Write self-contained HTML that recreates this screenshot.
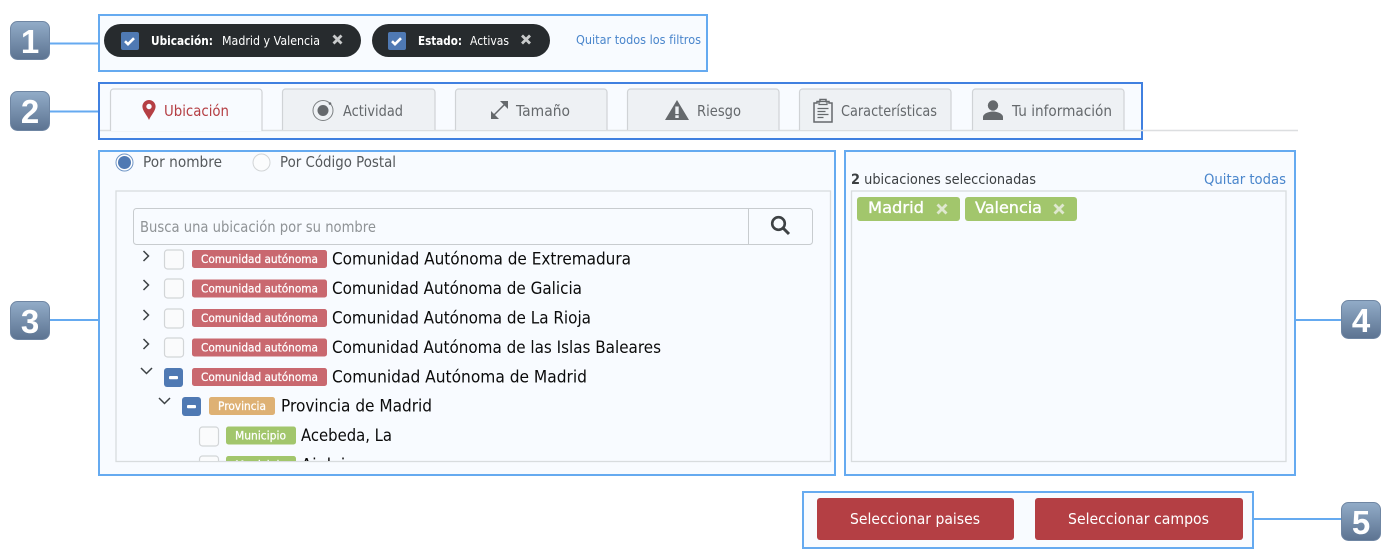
<!DOCTYPE html>
<html lang="es"><head><meta charset="utf-8"><title>Filtros</title>
<style>
html,body{margin:0;padding:0;background:#fff;width:1390px;height:558px;overflow:hidden}
svg{display:block}
text{font-family:"DejaVu Sans","Liberation Sans",sans-serif}
.box{fill:#f8fbff;stroke:#65aaf0;stroke-width:2}
.ln{stroke:#65aaf0;stroke-width:2}
.tab{fill:#eef1f4;stroke:#d0d3d6;stroke-width:1.2}
.tt{font-size:14.800px;fill:#65696c}
.rowt{font-size:16.800px;fill:#0b0b0b}
.tag{font-size:11.500px;fill:#fff;stroke:#fff;stroke-width:.25}
.cb{fill:#fafbfc;stroke:#d2d5d7;stroke-width:1.2}
.cbf{fill:#4f79b3}
.chev{fill:none;stroke:#3d4245;stroke-width:1.5}
.num{font-size:33px;font-weight:bold;fill:#fff;font-family:"Liberation Sans",sans-serif}
.bd{fill:url(#g);stroke:#6f86a3;stroke-width:1}
</style></head><body>
<svg width="1390" height="558" viewBox="0 0 1390 558" xmlns="http://www.w3.org/2000/svg">
<defs>
<linearGradient id="g" x1="0" y1="0" x2="0" y2="1"><stop offset="0" stop-color="#92acc8"/><stop offset="1" stop-color="#5c7391"/></linearGradient>
<clipPath id="tree"><rect x="117" y="246" width="712" height="215"/></clipPath>
<g id="chk"><rect x="0" y="0" width="19" height="19" rx="3" class="cb"/></g>
<g id="min"><rect x="0" y="0" width="19" height="19" rx="3" class="cbf"/><rect x="5" y="8" width="9" height="3.200" rx="1" fill="#fff"/></g>
</defs>

<!-- connector lines -->
<path class="ln" d="M50 43.500H98M50 111.500H98M50 320H98M1296 320H1341M1254 519H1341"/>

<!-- number badges -->
<g>
<rect class="bd" x="10.500" y="21.500" width="39" height="38" rx="7"/><text class="num" x="30" y="53" text-anchor="middle">1</text>
<rect class="bd" x="10.500" y="91.500" width="39" height="39" rx="7"/><text class="num" x="30" y="123" text-anchor="middle">2</text>
<rect class="bd" x="10.500" y="301.500" width="39" height="38" rx="7"/><text class="num" x="30" y="333" text-anchor="middle">3</text>
<rect class="bd" x="1341.500" y="300.500" width="39" height="38" rx="7"/><text class="num" x="1361" y="332" text-anchor="middle">4</text>
<rect class="bd" x="1341.500" y="502.500" width="39" height="38" rx="7"/><text class="num" x="1361" y="534" text-anchor="middle">5</text>
</g>

<!-- box 1 -->
<rect class="box" x="99" y="15" width="608" height="56"/>
<rect x="104" y="24" width="257" height="33" rx="16.500" fill="#272b2e"/>
<rect x="121" y="32" width="18" height="18" rx="2" class="cbf"/>
<path d="M125 41.200l3 3 6-6" fill="none" stroke="#fff" stroke-width="2.600"/>
<text x="151" y="45" font-size="12.800" font-weight="bold" fill="#fff" textLength="62" lengthAdjust="spacingAndGlyphs">Ubicación:</text>
<text x="222" y="45" font-size="12.800" fill="#fff" textLength="98" lengthAdjust="spacingAndGlyphs">Madrid y Valencia</text>
<path d="M333.500 35.500l8 8m0-8l-8 8" stroke="#c9cbcc" stroke-width="2.800" fill="none"/>
<rect x="372" y="24" width="178" height="33" rx="16.500" fill="#272b2e"/>
<rect x="388" y="32" width="18" height="18" rx="2" class="cbf"/>
<path d="M392 41.200l3 3 6-6" fill="none" stroke="#fff" stroke-width="2.600"/>
<text x="418" y="45" font-size="12.800" font-weight="bold" fill="#fff" textLength="44" lengthAdjust="spacingAndGlyphs">Estado:</text>
<text x="470" y="45" font-size="12.800" fill="#fff" textLength="39" lengthAdjust="spacingAndGlyphs">Activas</text>
<path d="M522 35.500l8 8m0-8l-8 8" stroke="#c9cbcc" stroke-width="2.800" fill="none"/>
<text x="576" y="44" font-size="12.800" fill="#4a86cc" textLength="125" lengthAdjust="spacingAndGlyphs">Quitar todos los filtros</text>

<!-- box 2 -->
<rect x="99" y="83" width="1043" height="56" fill="#f8fbff" stroke="#4080e0" stroke-width="2"/>
<path d="M100 130.500H1298" stroke="#dcdee0" stroke-width="1.600"/>
<path d="M110.500 131V92a3 3 0 0 1 3-3H259a3 3 0 0 1 3 3V131" fill="#f8fbff" stroke="#d0d3d6" stroke-width="1.200"/>
<path class="tab" d="M282.500 130V92a3 3 0 0 1 3-3H432a3 3 0 0 1 3 3V130"/>
<path class="tab" d="M455.500 130V92a3 3 0 0 1 3-3H604a3 3 0 0 1 3 3V130"/>
<path class="tab" d="M627.500 130V92a3 3 0 0 1 3-3H776a3 3 0 0 1 3 3V130"/>
<path class="tab" d="M799.500 130V92a3 3 0 0 1 3-3H948a3 3 0 0 1 3 3V130"/>
<path class="tab" d="M972.500 130V92a3 3 0 0 1 3-3H1121a3 3 0 0 1 3 3V130"/>

<!-- tab icons -->
<path fill-rule="evenodd" d="M149 100c-3.600 0-6.600 2.900-6.600 6.500 0 4.400 4.700 8.800 6.600 13.500 1.900-4.700 6.600-9.100 6.600-13.500 0-3.600-3-6.500-6.600-6.500zm0 3.800a2.700 2.700 0 1 1 0 5.400 2.700 2.700 0 0 1 0-5.400z" fill="#b53f44"/>
<circle cx="323" cy="110.500" r="10" fill="none" stroke="#7d8183" stroke-width="1"/>
<circle cx="323" cy="110.500" r="5.500" fill="#65696c"/>
<circle cx="330" cy="103.500" r="1.300" fill="#65696c"/>
<path d="M492 117l15-15" stroke="#65696c" stroke-width="1.500"/>
<path d="M491 111v8h8zM508 101h-8l8 8z" fill="#65696c"/>
<path fill-rule="evenodd" d="M677 100l12 20h-24zm-1.700 6.500v7.500h3.400v-7.500zm0 8.800v2.700h3.400v-2.700z" fill="#65696c"/>
<path d="M814 103h3v-1.500h3v-2h6v2h3v1.500h3v19h-18z" fill="none" stroke="#65696c" stroke-width="1.500"/>
<path d="M819 101.500h8v3h-8zM817.500 108.500h11M817.500 111.500h8M817.500 114.500h11M817.500 117.500h6" stroke="#65696c" stroke-width="1.200" fill="none"/>
<circle cx="993" cy="105.500" r="5.200" fill="#65696c"/>
<path d="M983 120v-3c0-3 5-5.500 10-5.500s10 2.500 10 5.500v3z" fill="#65696c"/>

<!-- tab labels -->
<text class="tt" style="fill:#b53f44" x="164" y="116" textLength="65" lengthAdjust="spacingAndGlyphs">Ubicación</text>
<text class="tt" x="343" y="116" textLength="60" lengthAdjust="spacingAndGlyphs">Actividad</text>
<text class="tt" x="516" y="116" textLength="54" lengthAdjust="spacingAndGlyphs">Tamaño</text>
<text class="tt" x="697" y="116" textLength="44" lengthAdjust="spacingAndGlyphs">Riesgo</text>
<text class="tt" x="841" y="116" textLength="96" lengthAdjust="spacingAndGlyphs">Características</text>
<text class="tt" x="1012" y="116" textLength="100" lengthAdjust="spacingAndGlyphs">Tu información</text>

<!-- box 3 -->
<rect class="box" x="99" y="151" width="736" height="324"/>
<circle cx="124.500" cy="162.500" r="8.500" fill="#fff" stroke="#6f95c6" stroke-width="1"/>
<circle cx="124.500" cy="162.500" r="6.500" fill="#4f79b3"/>
<circle cx="261.500" cy="162.500" r="8.500" fill="#fbfcfd" stroke="#d2d5d7" stroke-width="1"/>
<text x="143" y="167" font-size="14.800" fill="#55595c" textLength="79" lengthAdjust="spacingAndGlyphs">Por nombre</text>
<text x="280" y="167" font-size="14.800" fill="#55595c" textLength="116" lengthAdjust="spacingAndGlyphs">Por Código Postal</text>
<rect x="116" y="191" width="714.500" height="270.500" fill="#f8fbff" stroke="#d8dcde" stroke-width="1.300"/>
<rect x="133.500" y="208.500" width="679" height="36" rx="3" fill="#f8fbff" stroke="#c8cccf" stroke-width="1"/>
<path d="M748.500 209V244" stroke="#c8cccf"/>
<text x="140" y="232" font-size="14.800" fill="#8f9396" textLength="236" lengthAdjust="spacingAndGlyphs">Busca una ubicación por su nombre</text>
<circle cx="778.500" cy="223.500" r="6.300" fill="none" stroke="#3e4245" stroke-width="2.600"/>
<path d="M783 228l6 6" stroke="#3e4245" stroke-width="3"/>

<!-- tree -->
<g clip-path="url(#tree)">
<path class="chev" d="M143.500 251l5 5-5 5M143.500 280l5 5-5 5M143.500 310l5 5-5 5M143.500 339l5 5-5 5M141 368l5.500 5.500 5.500-5.500M159 398l5.500 5.500 5.500-5.500"/>
<use href="#chk" x="164.500" y="250"/>
<use href="#chk" x="164.500" y="279"/>
<use href="#chk" x="164.500" y="309"/>
<use href="#chk" x="164.500" y="338"/>
<use href="#min" x="164" y="368"/>
<use href="#min" x="182" y="397"/>
<use href="#chk" x="199.500" y="427"/>
<use href="#chk" x="199.500" y="456"/>

<g fill="#c9686f">
<rect x="192" y="250" width="135" height="18" rx="2.500"/>
<rect x="192" y="279.500" width="135" height="18" rx="2.500"/>
<rect x="192" y="309" width="135" height="18" rx="2.500"/>
<rect x="192" y="338.500" width="135" height="18" rx="2.500"/>
<rect x="192" y="368" width="135" height="18" rx="2.500"/>
</g>
<rect x="209" y="397" width="66" height="18" rx="2.500" fill="#deb174"/>
<rect x="226" y="426.500" width="70" height="18" rx="2.500" fill="#a2c66c"/>
<rect x="226" y="456" width="70" height="18" rx="2.500" fill="#a2c66c"/>

<g>
<text class="tag" x="201" y="263" textLength="117" lengthAdjust="spacingAndGlyphs">Comunidad autónoma</text>
<text class="tag" x="201" y="292.500" textLength="117" lengthAdjust="spacingAndGlyphs">Comunidad autónoma</text>
<text class="tag" x="201" y="322" textLength="117" lengthAdjust="spacingAndGlyphs">Comunidad autónoma</text>
<text class="tag" x="201" y="351.500" textLength="117" lengthAdjust="spacingAndGlyphs">Comunidad autónoma</text>
<text class="tag" x="201" y="381" textLength="117" lengthAdjust="spacingAndGlyphs">Comunidad autónoma</text>
<text class="tag" x="218" y="410" textLength="48" lengthAdjust="spacingAndGlyphs">Provincia</text>
<text class="tag" x="235" y="439.500" textLength="51" lengthAdjust="spacingAndGlyphs">Municipio</text>
<text class="tag" x="235" y="469" textLength="51" lengthAdjust="spacingAndGlyphs">Municipio</text>
</g>

<text class="rowt" x="332" y="264.500" textLength="299" lengthAdjust="spacingAndGlyphs">Comunidad Autónoma de Extremadura</text>
<text class="rowt" x="332" y="294" textLength="250" lengthAdjust="spacingAndGlyphs">Comunidad Autónoma de Galicia</text>
<text class="rowt" x="332" y="323.500" textLength="259" lengthAdjust="spacingAndGlyphs">Comunidad Autónoma de La Rioja</text>
<text class="rowt" x="332" y="353" textLength="329" lengthAdjust="spacingAndGlyphs">Comunidad Autónoma de las Islas Baleares</text>
<text class="rowt" x="332" y="382.500" textLength="255" lengthAdjust="spacingAndGlyphs">Comunidad Autónoma de Madrid</text>
<text class="rowt" x="281" y="411.500" textLength="151" lengthAdjust="spacingAndGlyphs">Provincia de Madrid</text>
<text class="rowt" x="301" y="441" textLength="91" lengthAdjust="spacingAndGlyphs">Acebeda, La</text>
<text class="rowt" x="301" y="470.500" textLength="51" lengthAdjust="spacingAndGlyphs">Ajalvir</text>
</g>

<!-- box 4 -->
<rect class="box" x="845" y="151" width="450" height="324"/>
<text x="851" y="184" font-size="14.200" fill="#3c4043" textLength="185" lengthAdjust="spacingAndGlyphs"><tspan font-weight="bold">2</tspan> ubicaciones seleccionadas</text>
<text x="1204" y="184" font-size="14.200" fill="#4a86cc" textLength="82" lengthAdjust="spacingAndGlyphs">Quitar todas</text>
<rect x="851.500" y="191" width="434.500" height="270.500" fill="#f8fbff" stroke="#d8dcde" stroke-width="1.300"/>
<rect x="857" y="197" width="103" height="24" rx="3" fill="#a2c66c"/>
<rect x="965" y="197" width="112" height="24" rx="3" fill="#a2c66c"/>
<text x="868" y="213" font-size="15.800" fill="#fff" stroke="#fff" stroke-width=".35" textLength="56" lengthAdjust="spacingAndGlyphs">Madrid</text>
<text x="975" y="213" font-size="15.800" fill="#fff" stroke="#fff" stroke-width=".35" textLength="67" lengthAdjust="spacingAndGlyphs">Valencia</text>
<path d="M937.500 204.500l9 9m0-9l-9 9M1054.500 204.500l9 9m0-9l-9 9" stroke="#dfe8cf" stroke-width="2.800" fill="none"/>

<!-- box 5 -->
<rect class="box" x="803" y="492" width="450" height="56"/>
<rect x="817" y="498" width="197" height="42" rx="3" fill="#b43f44"/>
<rect x="1035" y="498" width="208" height="42" rx="3" fill="#b43f44"/>
<text x="850" y="524" font-size="15" fill="#fff" textLength="130" lengthAdjust="spacingAndGlyphs">Seleccionar paises</text>
<text x="1068" y="524" font-size="15" fill="#fff" textLength="141" lengthAdjust="spacingAndGlyphs">Seleccionar campos</text>
</svg>
</body></html>
